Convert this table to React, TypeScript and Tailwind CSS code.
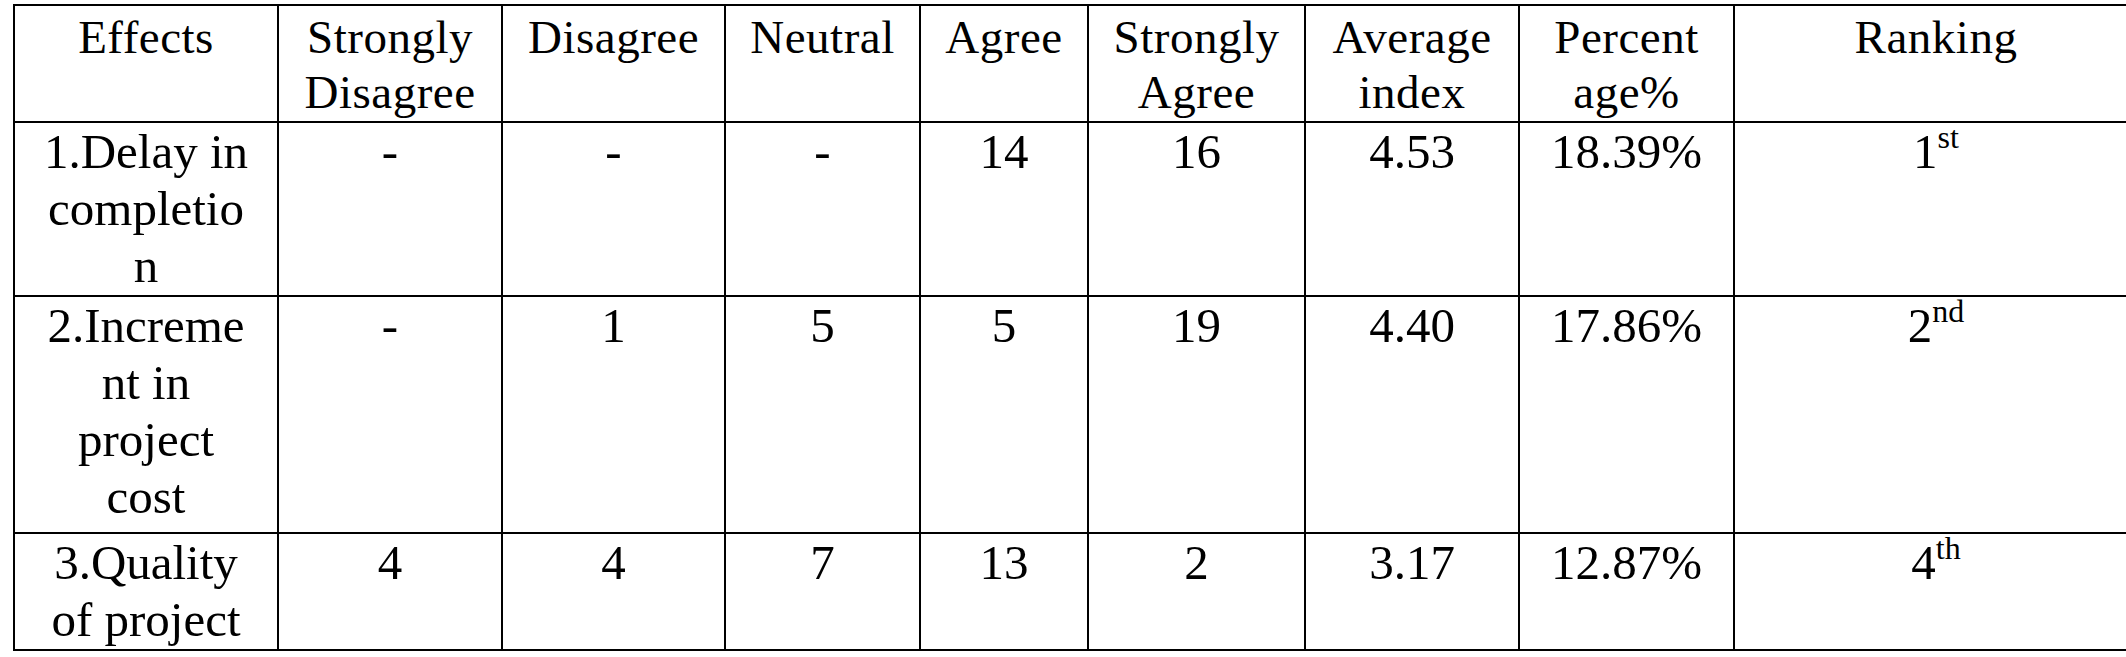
import React from "react";

const serif = { fontFamily: '"Liberation Serif", "Times New Roman", serif' };

type Cell = React.ReactNode;

const header: string[][] = [
  ["Effects"],
  ["Strongly", "Disagree"],
  ["Disagree"],
  ["Neutral"],
  ["Agree"],
  ["Strongly", "Agree"],
  ["Average", "index"],
  ["Percent", "age%"],
  ["Ranking"],
];

function Rank({ n, sup }: { n: string; sup: string }) {
  return (
    <span>
      {n}
      <span className="relative top-[-20px] text-[32px] leading-[0]">{sup}</span>
    </span>
  );
}

const rows: { effect: string[]; values: Cell[] }[] = [
  {
    effect: ["1.Delay in", "completio", "n"],
    values: ["-", "-", "-", "14", "16", "4.53", "18.39%", <Rank n="1" sup="st" />],
  },
  {
    effect: ["2.Increme", "nt in", "project", "cost"],
    values: ["-", "1", "5", "5", "19", "4.40", "17.86%", <Rank n="2" sup="nd" />],
  },
  {
    effect: ["3.Quality", "of project"],
    values: ["4", "4", "7", "13", "2", "3.17", "12.87%", <Rank n="4" sup="th" />],
  },
];

export default function App() {
  return (
    <div className="w-[2126px] h-[657px] overflow-hidden bg-white text-black" style={serif}>
      <div className="ml-[13px] mt-[4px] grid w-[2126px] grid-cols-[264px_224px_223px_195px_168px_217px_214px_215px_404px] grid-rows-[117px_174px_237px_117px] border-t-2 border-l-2 border-black">
        {header.map((lines, i) => (
          <div
            key={`h${i}`}
            className="border-r-2 border-b-2 border-black pt-[4px] text-center text-[47px] leading-[55px] tracking-[0.5px] whitespace-nowrap"
          >
            {lines.map((l, j) => (
              <div key={j}>{l}</div>
            ))}
          </div>
        ))}
        {rows.map((r, ri) => (
          <React.Fragment key={`r${ri}`}>
            <div className="border-r-2 border-b-2 border-black text-center text-[49px] leading-[57px] whitespace-nowrap">
              {r.effect.map((l, j) => (
                <div key={j}>{l}</div>
              ))}
            </div>
            {r.values.map((v, vi) => (
              <div
                key={vi}
                className="border-r-2 border-b-2 border-black text-center text-[49px] leading-[57px] whitespace-nowrap"
              >
                {v}
              </div>
            ))}
          </React.Fragment>
        ))}
      </div>
    </div>
  );
}
